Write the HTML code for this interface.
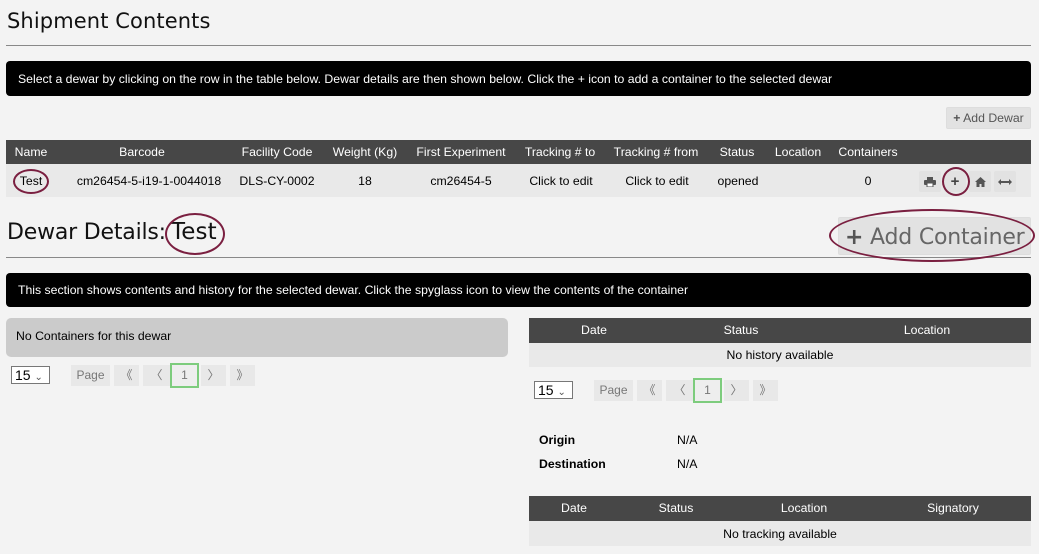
<!DOCTYPE html>
<html><head><meta charset="utf-8"><style>
*{box-sizing:border-box;margin:0;padding:0}
body{width:1039px;height:554px;background:#f3f3f3;font-family:"Liberation Sans",Arial,sans-serif;font-size:12.25px;color:#000;position:relative;overflow:hidden}
.a{position:absolute}
.h{font-family:"DejaVu Sans",sans-serif;font-size:21px;color:#111;letter-spacing:0.1px}
.line{height:1px;background:#888;left:6px;width:1025px}
.bar{left:6px;width:1025px;height:35px;background:#000;color:#fff;border-radius:4px;padding-left:12px;line-height:36px}
.btn{background:#e2e2e2;border:1px solid #ddd;border-radius:2px;color:#555}
.hdr{background:#474747;color:#fff;height:24px}
.c{position:absolute;top:0;line-height:25px;text-align:center;transform:translateX(-50%);white-space:nowrap}
.row{background:#e9e9e9}
.ib{position:absolute;top:7px;width:22px;height:21px;background:#e2e2e2;border-radius:2px;color:#444;text-align:center;line-height:21px;font-size:12px;font-weight:bold}
.sel{width:39px;height:18px;border:1px solid #777;background:#fff;font-size:14px;line-height:16px;padding-left:3px}
.pg{height:21px;background:#e8e8e8;color:#777;text-align:center;line-height:21px;font-size:12px}
.ov{position:absolute;border:2px solid #7a1f40;border-radius:50%}
</style></head><body>
<div class="a h" style="left:7px;top:9px">Shipment Contents</div>
<div class="a line" style="top:45px"></div>
<div class="a bar" style="top:61px">Select a dewar by clicking on the row in the table below. Dewar details are then shown below. Click the + icon to add a container to the selected dewar</div>
<div class="a btn" style="left:946px;top:107px;width:85px;height:22px;line-height:21px;text-align:center"><b style="color:#555">+</b> Add Dewar</div>

<div class="a hdr" style="left:6px;top:140px;width:1025px">
<span class="c" style="left:25px">Name</span><span class="c" style="left:136px">Barcode</span><span class="c" style="left:271px">Facility Code</span><span class="c" style="left:359px">Weight (Kg)</span><span class="c" style="left:455px">First Experiment</span><span class="c" style="left:554px">Tracking # to</span><span class="c" style="left:650px">Tracking # from</span><span class="c" style="left:731px">Status</span><span class="c" style="left:792px">Location</span><span class="c" style="left:862px">Containers</span></div>
<div class="a row" style="left:6px;top:164px;width:1025px;height:33px">
<span class="c" style="left:25px;line-height:35px">Test</span><span class="c" style="left:143px;line-height:35px">cm26454-5-i19-1-0044018</span><span class="c" style="left:271px;line-height:35px">DLS-CY-0002</span><span class="c" style="left:359px;line-height:35px">18</span><span class="c" style="left:455px;line-height:35px">cm26454-5</span><span class="c" style="left:555px;line-height:35px">Click to edit</span><span class="c" style="left:651px;line-height:35px">Click to edit</span><span class="c" style="left:732px;line-height:35px">opened</span><span class="c" style="left:862px;line-height:35px">0</span>
<div class="ib" style="left:913px"><svg width="12" height="10" viewBox="0 0 12 10" style="margin-top:6px"><rect x="3" y="0" width="6" height="3" fill="#555"/><rect x="0" y="3" width="12" height="5" rx="1" fill="#555"/><rect x="3" y="6" width="6" height="4" fill="#fff" stroke="#555"/></svg></div>
<div class="ib" style="left:938px;font-size:15px">+</div>
<div class="ib" style="left:963px"><svg width="11" height="10" viewBox="0 0 11 10" style="margin-top:6px"><path d="M5.5 0L0 5h1.5v5h3V7h2v3h3V5H11z" fill="#555"/></svg></div>
<div class="ib" style="left:988px"><svg width="14" height="6" viewBox="0 0 14 6" style="margin-top:8px"><path d="M0 3l3-3v2h8V0l3 3-3 3V4H3v2z" fill="#555"/></svg></div>
</div>
<div class="ov" style="left:13px;top:169px;width:36px;height:25px"></div>
<div class="ov" style="left:942px;top:167px;width:28px;height:29px"></div>

<div class="a h" style="left:7px;top:220px;font-size:22px;letter-spacing:-0.2px">Dewar Details:</div>
<div class="a h" style="left:171px;top:219px;font-size:23px">Test</div>
<div class="ov" style="left:165px;top:213px;width:60px;height:42px"></div>
<div class="a line" style="top:257px"></div>
<div class="a btn" style="left:838px;top:217px;width:193px;height:38px;line-height:40px;font-family:'DejaVu Sans',sans-serif;font-size:22px;padding-left:6px;color:#666;letter-spacing:-0.2px"><b style="color:#555">+</b> Add Container</div>
<div class="ov" style="left:829px;top:209px;width:206px;height:53px"></div>

<div class="a bar" style="top:273px;height:34px;line-height:35px">This section shows contents and history for the selected dewar. Click the spyglass icon to view the contents of the container</div>

<div class="a" style="left:6px;top:318px;width:502px;height:39px;background:#cbcbcb;border-radius:5px;padding-left:10px;line-height:37px">No Containers for this dewar</div>
<div class="a sel" style="left:11px;top:366px">15 <span style="font-size:10px;color:#555">&#8964;</span></div>
<div class="a pg" style="left:71px;top:365px;width:39px">Page</div>
<div class="a pg" style="left:114px;top:365px;width:25px">&#12298;</div>
<div class="a pg" style="left:143px;top:365px;width:27px">&#12296;</div>
<div class="a pg" style="left:170px;top:363px;width:29px;height:25px;border:2px solid #7dcc7d;line-height:21px;background:#eee">1</div>
<div class="a pg" style="left:201px;top:365px;width:25px">&#12297;</div>
<div class="a pg" style="left:230px;top:365px;width:25px">&#12299;</div>

<div class="a hdr" style="left:529px;top:318px;width:502px;height:25px">
<span class="c" style="left:65px">Date</span><span class="c" style="left:212px">Status</span><span class="c" style="left:398px">Location</span></div>
<div class="a row" style="left:529px;top:343px;width:502px;height:24px;text-align:center;line-height:25px">No history available</div>
<div class="a sel" style="left:534px;top:381px">15 <span style="font-size:10px;color:#555">&#8964;</span></div>
<div class="a pg" style="left:594px;top:380px;width:39px">Page</div>
<div class="a pg" style="left:637px;top:380px;width:25px">&#12298;</div>
<div class="a pg" style="left:666px;top:380px;width:27px">&#12296;</div>
<div class="a pg" style="left:693px;top:378px;width:29px;height:25px;border:2px solid #7dcc7d;line-height:21px;background:#eee">1</div>
<div class="a pg" style="left:724px;top:380px;width:25px">&#12297;</div>
<div class="a pg" style="left:753px;top:380px;width:25px">&#12299;</div>

<div class="a" style="left:539px;top:433px;font-weight:bold">Origin</div>
<div class="a" style="left:677px;top:433px">N/A</div>
<div class="a" style="left:539px;top:457px;font-weight:bold">Destination</div>
<div class="a" style="left:677px;top:457px">N/A</div>

<div class="a hdr" style="left:529px;top:496px;width:502px;height:25px">
<span class="c" style="left:45px">Date</span><span class="c" style="left:147px">Status</span><span class="c" style="left:275px">Location</span><span class="c" style="left:424px">Signatory</span></div>
<div class="a row" style="left:529px;top:521px;width:502px;height:25px;text-align:center;line-height:26px">No tracking available</div>
</body></html>
